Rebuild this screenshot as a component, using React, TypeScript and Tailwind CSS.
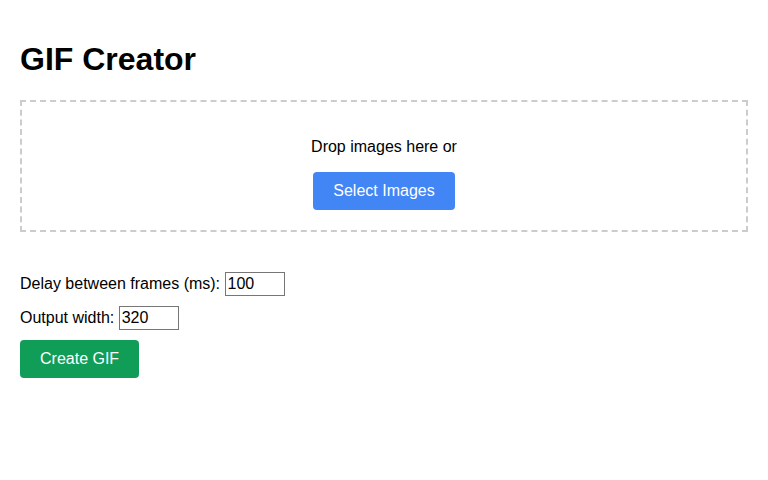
export default function App() {
  return (
    <div className="p-5 font-['Liberation_Sans',Arial,sans-serif] text-base text-black bg-white min-h-screen">
      <h1 className="text-[32px] font-bold leading-[37px] my-[21.44px]">GIF Creator</h1>

      {/* Drop zone */}
      <div className="border-2 border-dashed border-[#ccc] p-5 text-center">
        <p className="my-4 leading-[18px]">Drop images here or</p>
        <button
          type="button"
          className="bg-[#4285f4] text-white px-5 py-[10px] leading-[18px] rounded"
        >
          Select Images
        </button>
      </div>

      {/* Options */}
      <div className="mt-10 flex flex-col items-start gap-[10px]">
        <label className="flex items-center leading-[18px]">
          Delay between frames (ms):&nbsp;
          <input
            type="number"
            defaultValue={100}
            className="w-[60px] h-6 border border-[#767676] px-[2px] py-[1px] text-base"
          />
        </label>
        <label className="flex items-center leading-[18px]">
          Output width:&nbsp;
          <input
            type="number"
            defaultValue={320}
            className="w-[60px] h-6 border border-[#767676] px-[2px] py-[1px] text-base"
          />
        </label>
        <button
          type="button"
          className="bg-[#0f9d58] text-white px-5 py-[10px] leading-[18px] rounded"
        >
          Create GIF
        </button>
      </div>
    </div>
  )
}
